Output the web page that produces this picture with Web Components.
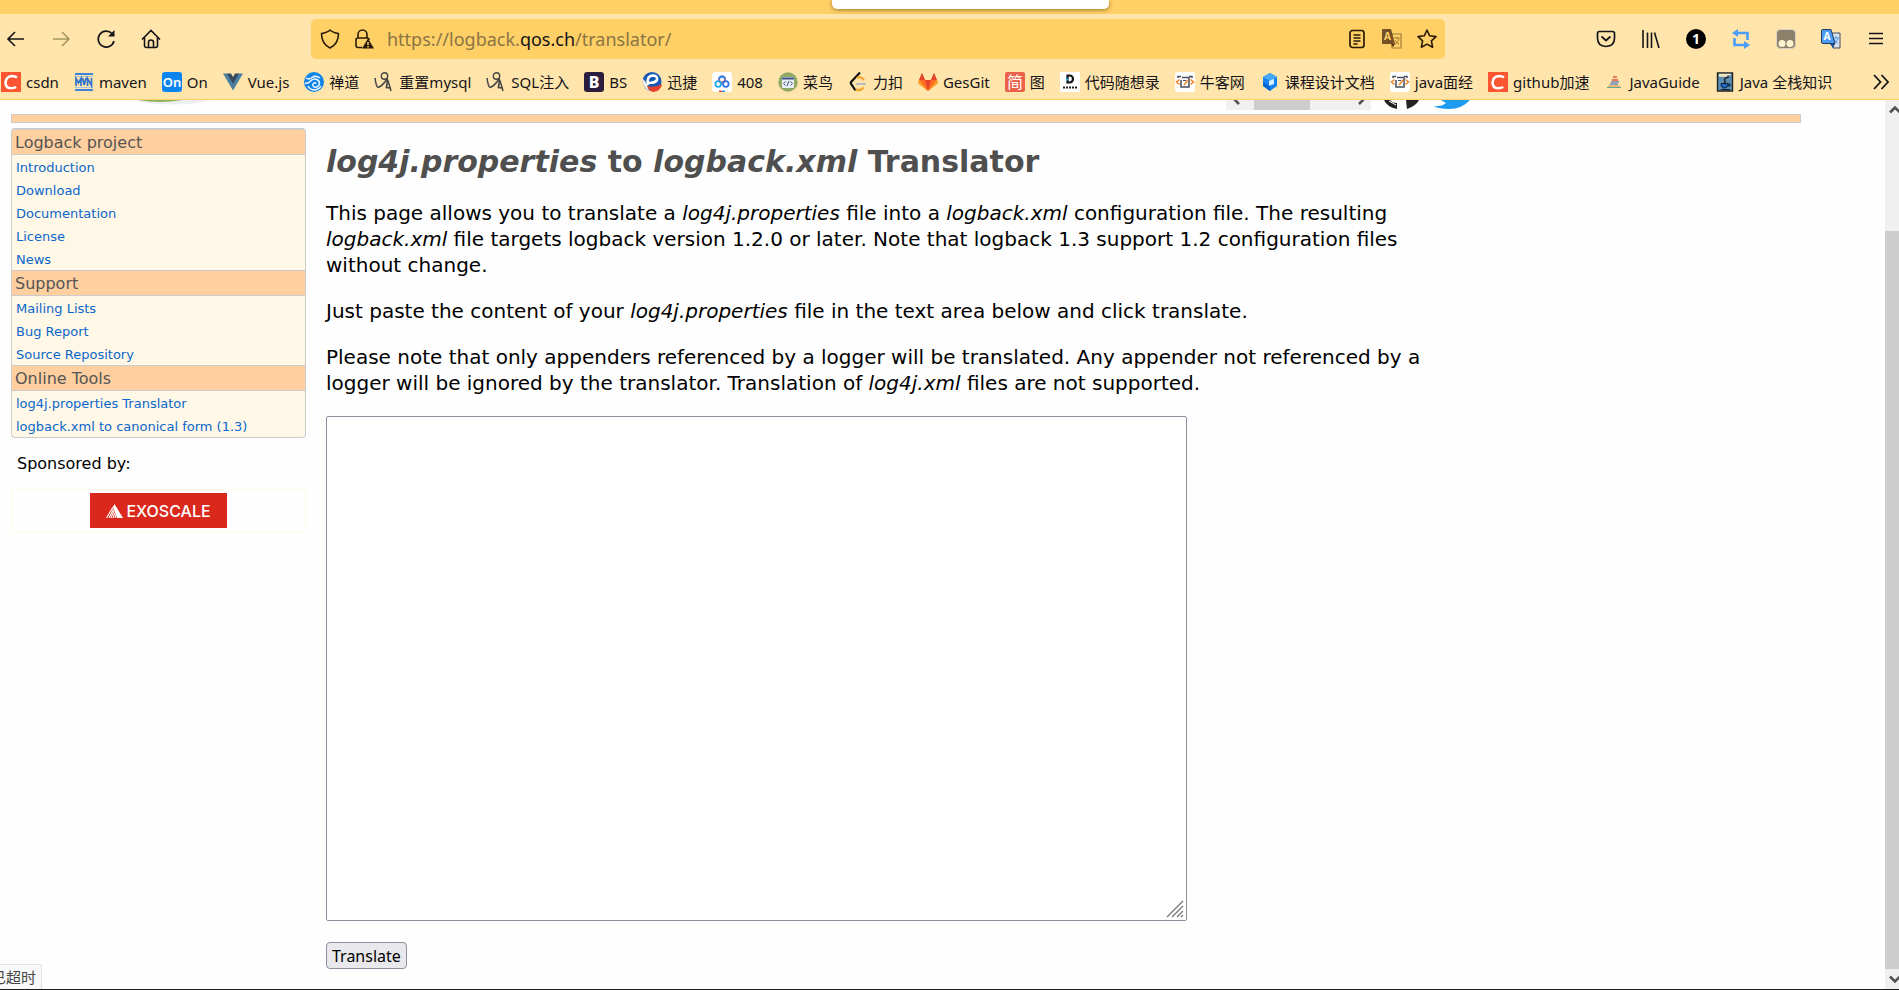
<!DOCTYPE html>
<html lang="en">
<head>
<meta charset="utf-8">
<title>log4j.properties Translator</title>
<style>
  html, body { height: 100%; }
  body {
    margin: 0;
    overflow: hidden;
    font-family: "DejaVu Sans", Verdana, sans-serif;
    background: #fefefe;
    --strip: #ffd066;
    --toolbar: #ffe5ab;
    --peach: #ffcf9f;
    --line: #cccccc;
    --ui-font: "Noto Sans", "Noto Sans CJK SC", sans-serif;
  }
</style>
</head>
<body>
<browser-window>
  <nav-bar slot="chrome"></nav-bar>
  <bookmarks-bar slot="chrome">
    <book-mark icon="csdn">csdn</book-mark>
    <book-mark icon="maven">maven</book-mark>
    <book-mark icon="on">On</book-mark>
    <book-mark icon="vue">Vue.js</book-mark>
    <book-mark icon="zen">禅道</book-mark>
    <book-mark icon="figure">重置mysql</book-mark>
    <book-mark icon="figure">SQL注入</book-mark>
    <book-mark icon="bootstrap">BS</book-mark>
    <book-mark icon="xunjie">迅捷</book-mark>
    <book-mark icon="pan">408</book-mark>
    <book-mark icon="runoob">菜鸟</book-mark>
    <book-mark icon="leetcode">力扣</book-mark>
    <book-mark icon="gitlab">GesGit</book-mark>
    <book-mark icon="jian">图</book-mark>
    <book-mark icon="carl">代码随想录</book-mark>
    <book-mark icon="nowcoder">牛客网</book-mark>
    <book-mark icon="cube">课程设计文档</book-mark>
    <book-mark icon="nowcoder">java面经</book-mark>
    <book-mark icon="csdn">github加速</book-mark>
    <book-mark icon="guide">JavaGuide</book-mark>
    <book-mark icon="javabook">Java 全栈知识</book-mark>
  </bookmarks-bar>
  <page-header></page-header>
  <side-menu slot="side">
    <menu-section heading="Logback project">
      <a href="#introduction">Introduction</a>
      <a href="#download">Download</a>
      <a href="#documentation">Documentation</a>
      <a href="#license">License</a>
      <a href="#news">News</a>
    </menu-section>
    <menu-section heading="Support">
      <a href="#lists">Mailing Lists</a>
      <a href="#bugs">Bug Report</a>
      <a href="#source">Source Repository</a>
    </menu-section>
    <menu-section heading="Online Tools">
      <a href="#translator">log4j.properties Translator</a>
      <a href="#canonical">logback.xml to canonical form (1.3)</a>
    </menu-section>
  </side-menu>
  <sponsor-box slot="side"></sponsor-box>
  <translator-page slot="main"></translator-page>
</browser-window>

<script>
const ICONS = {
  // toolbar
  back: `<path d="M18 10H2M9 3L2 10l7 7" fill="none" stroke="currentColor" stroke-width="1.6"/>`,
  forward: `<path d="M2 10h16M11 3l7 7-7 7" fill="none" stroke="currentColor" stroke-width="1.6"/>`,
  reload: `<path d="M18 12A8 8 0 1 1 16 4.500" fill="none" stroke="currentColor" stroke-width="1.7"/><path d="M18.500 1v6.500H12z" fill="currentColor"/>`,
  home: `<path d="M1 10.500L10 1.500l9 9M3.500 8.500v8a2 2 0 0 0 2 2h9a2 2 0 0 0 2-2v-8M7.500 18.500v-5a2.500 2.500 0 0 1 5 0v5" fill="none" stroke="currentColor" stroke-width="1.6"/>`,
  shield: `<path d="M10 1C8 3 5 4 1.500 4.500 1.500 11 4 16 10 19 16 16 18.500 11 18.500 4.500 15 4 12 3 10 1z" fill="none" stroke="currentColor" stroke-width="1.6" stroke-linejoin="round"/>`,
  lock: `<path d="M4 9V5.500a4 4 0 0 1 9 0V9M8 18.500H4a2 2 0 0 1-2-2V11a2 2 0 0 1 2-2h9q2 0 2 2" fill="none" stroke="currentColor" stroke-width="1.6"/><path d="M14 9.500l6 10H8z" fill="currentColor"/><path d="M14 13v3M14 17v1.500" stroke="#ffd066" stroke-width="1.500"/>`,
  reader: `<rect x="3" y="1.500" width="14" height="17" rx="2.500" fill="none" stroke="currentColor" stroke-width="1.7"/><path d="M6.500 6h7M6.500 9h7M6.500 12h7M6.500 15h4" stroke="currentColor" stroke-width="1.500"/>`,
  translateDim: `<path d="M10 5h9v14h-9z" fill="none" stroke="#a37d3c" stroke-width="1.2"/><path d="M12 9h6M15 8v2M17 10q-1 4-4 5M13 11q1 3 4 4" stroke="#a37d3c" fill="none"/><path d="M1 0h8l4 15H1q-1 0-1-1V1q0-1 1-1z" fill="#745126"/><path d="M9 15h4l-2 3z" fill="#5c3a16"/><text x="2" y="11" font-size="10" font-weight="700" fill="#ffd066">A</text>`,
  star: `<path d="M10 1l2.700 5.800 6.300.8-4.600 4.300 1.200 6.300L10 15.100l-5.600 3.100 1.200-6.300L1 7.600l6.300-.8z" fill="none" stroke="currentColor" stroke-width="1.6" stroke-linejoin="round"/>`,
  pocket: `<path d="M3.500 2.500h13q2 0 2 2V9q0 8-8.500 8.500Q1.500 17 1.500 9V4.500q0-2 2-2zM5.500 7.500L10 11.500l4.500-4" fill="none" stroke="currentColor" stroke-width="1.7"/>`,
  library: `<path d="M2 1v18M6.500 3.500V19M10.500 3.500V19M13.500 3.500L18 19" fill="none" stroke="currentColor" stroke-width="1.6"/>`,
  account: `<circle cx="10" cy="10" r="10" fill="#000"/><text x="10" y="15" font-size="14" font-weight="700" fill="#fff" text-anchor="middle">1</text>`,
  swap: `<path d="M7 4H16.500V11M13 16H3.500V9" fill="none" stroke="#4a9df8" stroke-width="2.600"/><path d="M7 0v8L1 4zM13 12v8l6-4z" fill="#4a9df8"/>`,
  monkey: `<rect x=".5" y=".5" width="19" height="19" rx="4" fill="#8b8069" stroke="#d8d2c8"/><circle cx="6" cy="14.500" r="3.500" fill="#fff2d0"/><circle cx="14" cy="14.500" r="3.500" fill="#fff2d0"/>`,
  translate: `<path d="M10 4h9v15h-7z" fill="#dce0e6" stroke="#3e4c60"/><path d="M12 9h6M15 7v2M17 9q-1 4-4 5M13 10q1 3 4 4" stroke="#4a9df8" fill="none"/><path d="M2 .5h8l4 14H2Q.5 14.500.5 13V2Q.5.5 2 .5z" fill="#4a9df8" stroke="#253858"/><path d="M9 15h5l-2 4z" fill="#1b4fa0"/><text x="2.500" y="11" font-size="10" font-weight="700" fill="#fff">A</text>`,
  menu: `<path d="M3 4.500h14M3 9.500h14M3 14.500h14" stroke="currentColor" stroke-width="1.7"/>`,
  more: `<path d="M3 3l6.500 7L3 17M10.500 3l6.500 7-6.500 7" fill="none" stroke="currentColor" stroke-width="1.8"/>`,
  // bookmarks
  csdn: `<rect width="20" height="20" fill="#fc5531"/><path d="M16 5.500Q14 4 11 4 5 4.500 4.500 10.500 4.500 16 10 16.300 13 16.300 15.200 15" fill="none" stroke="#fff" stroke-width="2.600"/>`,
  maven: `<path d="M1 2h18M1 18h18" stroke="#3f83d8" stroke-width="2"/><path d="M1 4.500h18M1 15.500h18" stroke="#a9c3dc"/><path d="M2 14V6.500L4.500 11 7 6.500V14M8.500 6l1.700 7L12 6M13.500 14V6.500l4 7V6" fill="none" stroke="#2d73cc" stroke-width="1.700"/>`,
  on: `<rect width="20" height="20" rx="3" fill="#0a84f0"/><text x="10" y="15" font-size="13" font-weight="600" fill="#fff" text-anchor="middle">On</text>`,
  vue: `<path d="M0 1.500h4.500L10 11l5.500-9.500H20L10 18.500z" fill="#4d7f9e"/><path d="M4 1.500h4l2 3.500 2-3.500h4L10 12z" fill="#354a5e"/>`,
  zen: `<circle cx="10" cy="10" r="10" fill="#1184e8"/><path d="M2 6q3 2 6-.5 4-2.500 8 .5M1 11q3 1 5-1.500Q9 6 13 7.500q3.500 2 2 5.500-2 3-5 2-2.500-2 0-4 1.500-.5 2 .8M4 14q2 4 7 4 4-.5 6-4" fill="none" stroke="#e9f4ff" stroke-width="1.500"/>`,
  figure: `<circle cx="10.500" cy="4" r="3.200" fill="none" stroke="#444" stroke-width="1.400"/><path d="M1 6q1 8 3 9.500 4-1 9-8.500 2 4 4 12" fill="none" stroke="#444" stroke-width="1.500"/><path d="M13.500 8l-1 7.500 4 .500" fill="none" stroke="#444" stroke-width="1.700"/>`,
  bootstrap: `<rect width="20" height="20" rx="3" fill="#2b1d3d"/><text x="10" y="16" font-size="16" font-weight="800" fill="#fff" text-anchor="middle">B</text>`,
  xunjie: `<circle cx="10" cy="9.500" r="9.500" fill="#1559b5"/><path d="M0 6q5 4 7 12Q0 16 0 6z" fill="#f3ece0"/><path d="M6 13Q4 4 11 3.500q5 .5 4 4.500-2 3.500-9 2.500" fill="none" stroke="#fff" stroke-width="2.600"/><path d="M5 14q8 2 15-2-1 7-9 8-4-1-6-6z" fill="#e5402c"/>`,
  pan: `<rect width="20" height="20" rx="3" fill="#fff"/><circle cx="10" cy="7.500" r="3" fill="none" stroke="#e5483c" stroke-width="1.800"/><path d="M7 7.500a3 3 0 0 1 6 0" fill="none" stroke="#2b8df0" stroke-width="1.800"/><circle cx="6.200" cy="12" r="2.800" fill="none" stroke="#20a6e8" stroke-width="1.800"/><circle cx="13.800" cy="12" r="2.800" fill="none" stroke="#2b72e8" stroke-width="1.800"/><path d="M7 19.300h3" stroke="#e54335" stroke-width="1.500"/><path d="M10 19.300h3" stroke="#2b8df0" stroke-width="1.500"/>`,
  runoob: `<circle cx="10" cy="10" r="9.700" fill="#91a967"/><rect x="4" y="5" width="12" height="11" rx="1" fill="#e8ecf3"/><path d="M4 6.500h12" stroke="#3d5484" stroke-width="2"/><path d="M7.500 9.500L5.500 11.500l2 2M12.500 9.500l2 2-2 2M11 9l-2 5" fill="none" stroke="#3d5484"/>`,
  leetcode: `<path d="M12 0.500L3.500 9.500q-1.500 1.500 0 3l4 6" fill="none" stroke="#111" stroke-width="2.200"/><path d="M9 6q3-2.500 7 2M8 17q3 3 8-1.500" fill="none" stroke="#f5a62b" stroke-width="2.300"/><path d="M8 12h10" stroke="#bbb" stroke-width="2"/>`,
  gitlab: `<path d="M4 1l3 7h6l3-7 4 10-10 8L0 11z" fill="#fc6d26"/><path d="M7 8h6l-3 11zM4 1L1 8h6zM16 1l3 7h-6z" fill="#e24329"/><path d="M1 8l-1 3 10 8zM19 8l1 3-10 8z" fill="#fca326"/>`,
  jian: `<rect width="20" height="20" rx="2" fill="#ec6149"/><text x="10" y="16" font-size="16" fill="#fff" text-anchor="middle">简</text>`,
  carl: `<rect width="20" height="20" fill="#fff"/><path d="M7.500 3.500h2a3.500 3.500 0 0 1 0 7h-2z" fill="none" stroke="#111" stroke-width="2.200"/><path d="M6 5.500l3 2-3 2z" fill="#35a4dc"/><path d="M3 15.500h14" stroke="#222" stroke-width="2" stroke-dasharray="2 1"/>`,
  nowcoder: `<rect width="20" height="20" rx="3" fill="#fff"/><path d="M3 6V4.500h3M17 6V4.500h-3M7 5.500h7V15H6V8" fill="none" stroke="#4a4f5a" stroke-width="1.500"/><path d="M4.500 7.500L1.500 10l3 2.500M15.500 7.500l3 2.500-3 2.500M13 8l-4 5" fill="none" stroke="#ef8a2c" stroke-width="1.600"/><path d="M8 8.500h3" stroke="#4a4f5a"/>`,
  cube: `<path d="M10 1l7 4v9l-7 5-7-5V5z" fill="#1684ee"/><path d="M10 1l7 4-7 4-7-4z" fill="#45a7f5"/><path d="M9 9l5-2v5l-5 2z" fill="#d9eefe"/><path d="M3 10l7 4v5l-7-5z" fill="#0767d2"/>`,
  guide: `<path d="M9 5h4M8 8h6" stroke="#e55240" stroke-width="1.500"/><path d="M7 10h8M6 12h8" stroke="#6b8eb3" stroke-width="1.400"/><path d="M4 14h12" stroke="#db8b54"/><path d="M3 15.500h14" stroke="#5ea98a"/>`,
  javabook: `<path d="M2.500 1h15v18h-15z" fill="#5b8eb1" stroke="#222" stroke-width="1.400"/><path d="M4 2.500h12M4 4h8" stroke="#f4e7c1" stroke-width="1.600"/><path d="M14 5q-6 1-4 4 1 1-1 2" fill="none" stroke="#222" stroke-width="1.500"/><path d="M6 11.500h7q0 4.500-3.500 4.500T6 11.500zM13 12h2v2h-2" fill="#1d67c4" stroke="#123"/><path d="M6 17.500h9" stroke="#123"/>`
};

class SvgIcon extends HTMLElement {
  constructor() {
    super();
    this.attachShadow({ mode: "open" });
  }
  connectedCallback() {
    this.shadowRoot.innerHTML = `
    <style>
      :host { display: block; flex: none; width: 20px; height: 20px; font-family: var(--ui-font); }
      svg { display: block; width: 100%; height: 100%; }
    </style>
    <svg viewBox="0 0 20 20" aria-hidden="true">${ICONS[this.getAttribute("name")]}</svg>`;
  }
}

class NavBar extends HTMLElement {
  constructor() {
    super();
    this.attachShadow({ mode: "open" });
    this.shadowRoot.innerHTML = `
    <style>
      :host { display: block; font-family: var(--ui-font); }
      .tabs { position: relative; height: 14px; background: var(--strip); }
      .popup {
        position: absolute; top: 0; left: 50%; width: 277px; height: 9px;
        margin-left: -118px; background: #fff; border-radius: 0 0 5px 5px;
        box-shadow: 0 1px 4px rgba(90, 60, 0, .6);
      }
      .bar { display: flex; align-items: center; height: 50px; padding-right: 1px; background: var(--toolbar); }
      .group { display: flex; }
      .group:first-child { margin-left: -7px; }
      button {
        display: flex; align-items: center; justify-content: center;
        width: 45px; height: 40px; padding: 0; border: 0; background: none; color: #15141a;
      }
      button:disabled { color: #a5975f; }
      .spring { flex: none; width: 138px; }
      .url {
        display: flex; flex: 1; align-items: center; height: 40px; min-width: 0;
        padding: 0 1px 0 9px; background: var(--strip); border-radius: 5px; color: #2b1a08;
      }
      .url button { width: 35px; color: inherit; }
      .url button:first-child { width: 20px; margin-right: 14px; }
      .url button:nth-child(2) { width: 20px; }
      .address { flex: 1; margin-left: 13px; font-size: 18px; color: #8a7443; }
      .address b { font-weight: 400; color: #15141a; }
    </style>
    <div class="tabs"><div class="popup"></div></div>
    <div class="bar">
      <div class="group">
        <button aria-label="Back"><svg-icon name="back"></svg-icon></button>
        <button aria-label="Forward" disabled><svg-icon name="forward"></svg-icon></button>
        <button aria-label="Reload"><svg-icon name="reload"></svg-icon></button>
        <button aria-label="Home"><svg-icon name="home"></svg-icon></button>
      </div>
      <div class="spring"></div>
      <div class="url">
        <button aria-label="Tracking protection"><svg-icon name="shield"></svg-icon></button>
        <button aria-label="Connection"><svg-icon name="lock"></svg-icon></button>
        <div class="address">https://logback.<b>qos.ch</b>/translator/</div>
        <button aria-label="Reader view"><svg-icon name="reader"></svg-icon></button>
        <button aria-label="Translate page"><svg-icon name="translateDim"></svg-icon></button>
        <button aria-label="Bookmark"><svg-icon name="star"></svg-icon></button>
      </div>
      <div class="spring"></div>
      <div class="group">
        <button aria-label="Pocket"><svg-icon name="pocket"></svg-icon></button>
        <button aria-label="Library"><svg-icon name="library"></svg-icon></button>
        <button aria-label="Account"><svg-icon name="account"></svg-icon></button>
        <button aria-label="Swap"><svg-icon name="swap"></svg-icon></button>
        <button aria-label="Scripts"><svg-icon name="monkey"></svg-icon></button>
        <button aria-label="Translate"><svg-icon name="translate"></svg-icon></button>
        <button aria-label="Menu"><svg-icon name="menu"></svg-icon></button>
      </div>
    </div>`;
  }
}

class BookmarksBar extends HTMLElement {
  constructor() {
    super();
    this.attachShadow({ mode: "open" });
    this.shadowRoot.innerHTML = `
    <style>
      :host {
        display: flex; align-items: center; height: 35px; padding: 0 8px 0 1px;
        background: var(--toolbar); border-bottom: 1px solid var(--strip);
        font: 15px/20px var(--ui-font); color: #15141a;
      }
      nav { display: flex; flex: 1; gap: 15px; min-width: 0; }
      button { padding: 0; border: 0; background: none; color: inherit; }
    </style>
    <nav><slot></slot></nav>
    <button aria-label="More bookmarks"><svg-icon name="more"></svg-icon></button>`;
  }
}

class BookMark extends HTMLElement {
  constructor() {
    super();
    this.attachShadow({ mode: "open" });
  }
  connectedCallback() {
    this.shadowRoot.innerHTML = `
    <style>
      :host { display: block; flex: none; }
      a { display: flex; align-items: center; gap: 5px; color: inherit; text-decoration: none; white-space: nowrap; }
    </style>
    <a href="#bookmark"><svg-icon name="${this.getAttribute("icon")}"></svg-icon><span><slot></slot></span></a>`;
  }
}

class BrowserWindow extends HTMLElement {
  constructor() {
    super();
    this.attachShadow({ mode: "open" });
    this.shadowRoot.innerHTML = `
    <style>
      :host { display: flex; flex-direction: column; height: 100vh; box-sizing: border-box; border-bottom: 1px solid #1c1c1c; }
      .view { display: flex; flex: 1; min-height: 0; }
      .page { flex: 1; min-width: 0; overflow: hidden; padding-left: 11px; }
      .columns { display: flex; align-items: flex-start; gap: 20px; margin-top: 5px; }
      .side { flex: none; width: 295px; }
      .main { flex: 1; min-width: 0; }
      .status {
        position: fixed; left: 0; bottom: 1px; display: flex; justify-content: flex-end;
        width: 36px; padding-right: 5px; overflow: hidden;
        border: solid #dfe1e6; border-width: 1px 1px 0 0; background: #f9f9fa;
        font: 15px/24px var(--ui-font); color: #444; white-space: nowrap;
      }
    </style>
    <slot name="chrome"></slot>
    <div class="view">
      <div class="page">
        <slot></slot>
        <div class="columns">
          <div class="side"><slot name="side"></slot></div>
          <div class="main"><slot name="main"></slot></div>
        </div>
      </div>
      <scroll-rail></scroll-rail>
    </div>
    <div class="status">已超时</div>`;
  }
}

class ScrollRail extends HTMLElement {
  constructor() {
    super();
    this.attachShadow({ mode: "open" });
    this.shadowRoot.innerHTML = `
    <style>
      :host { display: flex; flex-direction: column; flex: none; width: 14px; background: #f0f0f0; overflow: hidden; }
      svg { flex: none; width: 20px; height: 20px; fill: none; stroke: #505050; stroke-width: 2.500; }
      .above { flex: 111; }
      .thumb { flex: 737; background: #cdcdcd; }
    </style>
    <svg viewBox="0 0 20 20"><path d="M5 12.500l5-5 5 5"/></svg>
    <div class="above"></div>
    <div class="thumb"></div>
    <svg viewBox="0 0 20 20"><path d="M5 7.500l5 5 5-5"/></svg>`;
  }
}

class PageHeader extends HTMLElement {
  constructor() {
    super();
    this.attachShadow({ mode: "open" });
    this.shadowRoot.innerHTML = `
    <style>
      :host { display: block; width: 95.5%; }
      .cut { display: flex; align-items: flex-start; height: 14px; padding: 0 330px 0 119px; }
      .logo { flex: none; width: 84px; height: 6px; margin-right: auto; }
      .rail { display: flex; justify-content: space-between; width: 145px; height: 10px; background: #f0f0f0; }
      .rail i { width: 56px; margin-right: 32px; background: #cdcdcd; }
      .rail svg { width: 20px; height: 10px; }
      .git { width: 40px; height: 10px; margin: 0 10px 0 12px; }
      .bird { width: 38px; height: 10px; }
      .strip { height: 7px; background: var(--peach); border: 1px solid var(--line); }
    </style>
    <div class="cut">
      <svg class="logo" viewBox="0 0 84 6"><path d="M2 0q40 9 80 0z" fill="#eceef0"/><path d="M8 0h44q-22 4-44 0z" fill="#8fb35c"/></svg>
      <div class="rail">
        <svg viewBox="0 0 20 10"><path d="M7-2l6 6" stroke="#505050" stroke-width="2.500"/></svg>
        <i></i>
        <svg viewBox="0 0 20 10"><path d="M14-2L8 4" stroke="#505050" stroke-width="2.500"/></svg>
      </div>
      <svg class="git" viewBox="0 0 40 10"><path d="M1 0h6q2 3 7 3v6Q4 7 1 0zM23 0h13q-3 6-12 9z" fill="#24201f"/><path d="M6 1l7 4" stroke="#fff"/></svg>
      <svg class="bird" viewBox="0 0 38 10"><path d="M0 6q8 1 13-3L8 0h29q-8 9-21 9Q6 9 0 6z" fill="#1d9bf0"/></svg>
    </div>
    <div class="strip"></div>`;
  }
}

class SideMenu extends HTMLElement {
  constructor() {
    super();
    this.attachShadow({ mode: "open" });
    this.shadowRoot.innerHTML = `
    <style>
      :host {
        display: block; border: 1px solid var(--line); border-top-width: 2px;
        border-radius: 4px; background: #fff8e7; overflow: hidden;
      }
    </style>
    <slot></slot>`;
  }
}

class MenuSection extends HTMLElement {
  constructor() {
    super();
    this.attachShadow({ mode: "open" });
  }
  connectedCallback() {
    this.shadowRoot.innerHTML = `
    <style>
      :host { display: block; border-top: 1px solid var(--line); }
      :host(:first-child) { border-top: 0; }
      h3 {
        margin: 0; padding: 2px 0 0 3px; background: var(--peach); color: #555;
        border-bottom: 1px solid var(--line); font-size: 16px; font-weight: 400; line-height: 22px;
      }
      ::slotted(a) {
        display: block; padding: 2px 0 0 4px; color: #0a66cc;
        font-size: 13px; line-height: 21px; text-decoration: none;
      }
    </style>
    <h3>${this.getAttribute("heading")}</h3>
    <slot></slot>`;
  }
}

class SponsorBox extends HTMLElement {
  constructor() {
    super();
    this.attachShadow({ mode: "open" });
    this.shadowRoot.innerHTML = `
    <style>
      :host { display: block; }
      p { margin: 16px 0 15px; padding-left: 6px; font-size: 16px; line-height: 20px; }
      .box { display: flex; justify-content: center; padding: 3px 0; border: 1px solid #fff8e7; }
      a {
        display: flex; align-items: center; justify-content: center; gap: 3px;
        width: 137px; height: 35px; background: #da291c; color: #fff;
        font: 500 16px Inter, sans-serif; text-decoration: none;
      }
      svg { width: 17px; height: 14px; }
    </style>
    <p>Sponsored by:</p>
    <div class="box">
      <a href="#exoscale">
        <svg viewBox="0 0 17 14"><path d="M8.500 0L17 14h-6L7 3z" fill="#fff"/><path d="M7 3L.5 14M7.500 5L3 14M8 7l-3 7M9 9l-2 5M10 11l-1 3" stroke="#fff" stroke-width="1.100"/></svg>
        EXOSCALE
      </a>
    </div>`;
  }
}

class TranslatorPage extends HTMLElement {
  constructor() {
    super();
    this.attachShadow({ mode: "open" });
    this.shadowRoot.innerHTML = `
    <style>
      :host { display: block; max-width: 1110px; font-size: 20px; line-height: 26px; color: #000; }
      h2 { margin: 14px 0 18px; font-size: 30px; line-height: 40px; color: #4f4f4f; }
      p { margin: 0 0 20px; }
      form { display: flex; flex-direction: column; align-items: flex-start; gap: 21px; }
      textarea {
        box-sizing: border-box; width: 861px; max-width: 100%; height: 505px; margin: 0;
        border: 1px solid #8f8f9d; border-radius: 2px; background: #fff; resize: none; outline: 0;
        display: block;
      }
      .field { position: relative; display: block; }
      .grip { position: absolute; right: 3px; bottom: 3px; width: 18px; height: 18px; pointer-events: none; }
      button {
        height: 27px; padding: 0 5px; border: 1px solid #8f8f9d; border-radius: 4px;
        background: #e9e9ed; color: #000; font: 16px/24px var(--ui-font);
      }
    </style>
    <h2><em>log4j.properties</em> to <em>logback.xml</em> Translator</h2>
    <p>This page allows you to translate a <em>log4j.properties</em> file into a <em>logback.xml</em> configuration file. The resulting <em>logback.xml</em> file targets logback version 1.2.0 or later. Note that logback 1.3 support 1.2 configuration files without change.</p>
    <p>Just paste the content of your <em>log4j.properties</em> file in the text area below and click translate.</p>
    <p>Please note that only appenders referenced by a logger will be translated. Any appender not referenced by a logger will be ignored by the translator. Translation of <em>log4j.xml</em> files are not supported.</p>
    <form>
      <label class="field">
        <textarea aria-label="log4j.properties content" spellcheck="false"></textarea>
        <svg class="grip" viewBox="0 0 18 18"><path d="M1 17L17 1M6 17L17 6M11 17l6-6M15 17l2-2" stroke="#777" stroke-width="1.300"/></svg>
      </label>
      <button type="button">Translate</button>
    </form>`;
  }
}

customElements.define("svg-icon", SvgIcon);
customElements.define("nav-bar", NavBar);
customElements.define("bookmarks-bar", BookmarksBar);
customElements.define("book-mark", BookMark);
customElements.define("scroll-rail", ScrollRail);
customElements.define("browser-window", BrowserWindow);
customElements.define("page-header", PageHeader);
customElements.define("side-menu", SideMenu);
customElements.define("menu-section", MenuSection);
customElements.define("sponsor-box", SponsorBox);
customElements.define("translator-page", TranslatorPage);
</script>
</body>
</html>
